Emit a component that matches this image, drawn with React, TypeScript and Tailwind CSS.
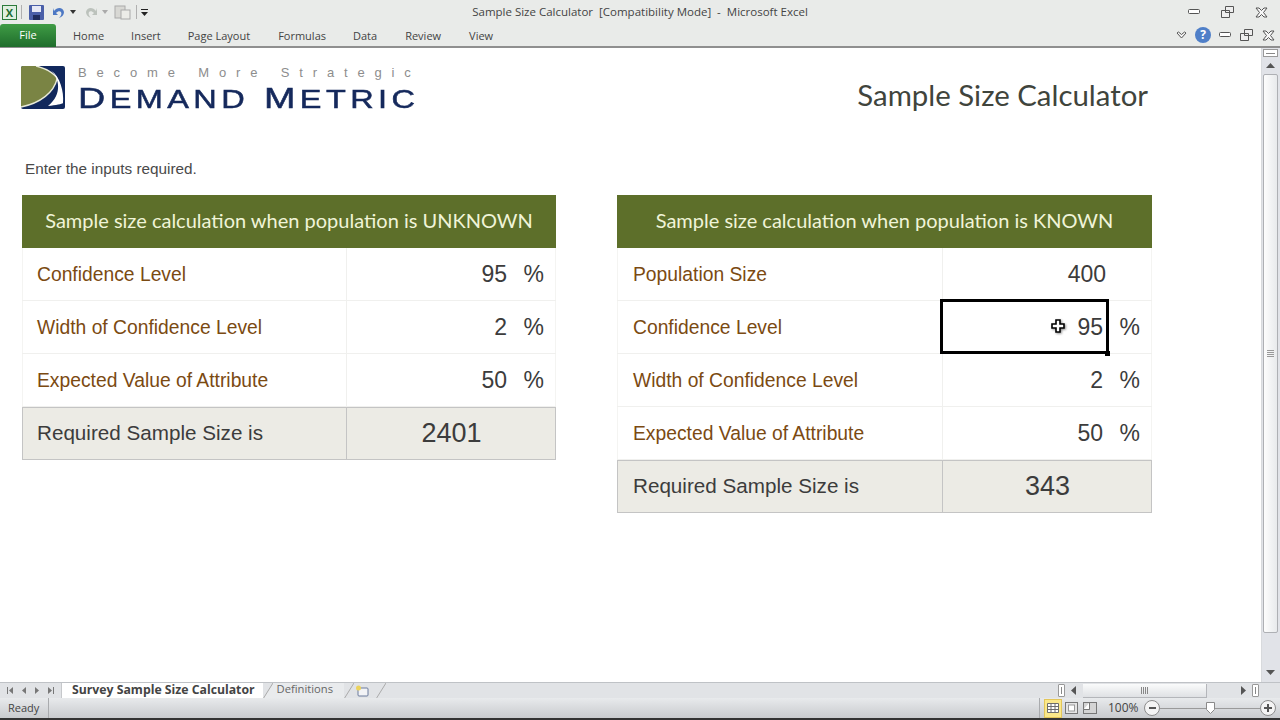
import React from "react";

const ui = "font-['Open_Sans',sans-serif]";

function Row({ label, value, pct, selected, wide, right }: { label: string; value: string; pct?: boolean; selected?: boolean; wide?: boolean; right?: boolean }) {
  return (
    <div className="flex h-[53px] border-b border-[#f0f0ee] shadow-[inset_1px_0_0_#f4f4f2,inset_-1px_0_0_#f4f4f2] font-['Liberation_Sans',sans-serif]">
      <div className={`${right ? "w-[326px] pl-[16px]" : "w-[325px] pl-[15px]"} shrink-0 flex items-center pt-[2px] text-[19.3px] text-[#7b4a12] border-r border-[#f0f0ee]`}>{label}</div>
      <div className={`relative flex-1 flex items-center justify-end text-[23px] text-[#3c3c3c] ${wide ? "pr-[2px]" : "pr-[5px]"}`}>
        <span>{value}</span>
        {selected && (
          <>
            <div className="absolute left-[-3px] right-[-1px] top-[-2px] bottom-[-1px] border-[3px] border-black" />
            <div className="absolute right-[-2px] bottom-[-3px] w-[5px] h-[5px] bg-black" />
            <svg className="absolute left-[107px] top-[17px] drop-shadow-[1px_1px_1px_rgba(0,0,0,0.45)]" width="18" height="18" viewBox="0 0 18 18">
              <path d="M6 2h4v4h4v4h-4v4H6v-4H2V6h4z" fill="#fff" stroke="#000" strokeWidth="1.6" />
            </svg>
          </>
        )}
      </div>
      <div className="w-[44px] shrink-0 flex items-center justify-end pr-[12px] text-[23px] text-[#3c3c3c]">{pct ? "%" : ""}</div>
    </div>
  );
}

function Total({ value, right }: { value: string; right?: boolean }) {
  return (
    <div className="flex h-[53px] bg-[#ecebe5] border border-[#c4c4c4] font-['Liberation_Sans',sans-serif] text-[#3c3c3c]">
      <div className={`${right ? "w-[325px] pl-[15px]" : "w-[324px] pl-[14px]"} shrink-0 flex items-center text-[20.65px] border-r border-[#c4c4c4]`}>Required Sample Size is</div>
      <div className="flex-1 flex items-center justify-center pl-[1px] text-[27px]">{value}</div>
    </div>
  );
}

function Table({ title, children, w }: { title: string; children: React.ReactNode; w: string }) {
  return (
    <div className={w}>
      <div className="h-[53px] bg-[#5d6f2a] flex items-center justify-center pb-[4px] text-[20px] text-[#f0f4d8] font-['Lato',sans-serif]">{title}</div>
      {children}
    </div>
  );
}

function Logo() {
  return (
    <div className="flex items-start gap-[13px]">
      <svg className="mt-[1px]" width="44" height="43" viewBox="0 0 44 43">
        <rect x="0" y="0" width="44" height="43" rx="2" fill="#11285c" />
        <path d="M0 2q0-2 2-2h13c14 3 20 10 21 13-3 13-16 24-36 28z" fill="#7a8444" />
        <path d="M15 0c14 3 21 11 21 13-3 13-16 24-36 28" fill="none" stroke="#e8ead8" strokeWidth="1.3" />
        <path d="M30 4c8 8 12 24-3 36 8-1 14-2 15-3 1-12-3-26-12-33z" fill="#fff" />
      </svg>
      <div className="w-[340px] pt-[1px]">
        <div className="text-[13px] leading-[13px] tracking-[9.85px] text-[#8d8d8d] font-['Liberation_Sans',sans-serif] whitespace-nowrap">Become More Strategic</div>
        <div className="mt-[6px] leading-[26px] text-[#15295c] font-['Liberation_Sans',sans-serif] whitespace-nowrap tracking-[3.4px] text-[29px] origin-left scale-x-[1.3] [-webkit-text-stroke:0.5px_#15295c]">
          D<span className="text-[25px]">EMAND</span> M<span className="text-[25px]">ETRIC</span>
        </div>
      </div>
    </div>
  );
}

function WinButtons({ small }: { small?: boolean }) {
  return (
    <div className={`flex items-center ${small ? "gap-[9px]" : "gap-[21px]"}`}>
      <svg width="12" height="6" viewBox="0 0 12 6"><rect x=".5" y=".5" width="11" height="4" rx="1" fill="#fff" stroke="#555" /></svg>
      <svg width="13" height="12" viewBox="0 0 13 12"><path d="M4.5.5h8v6h-8zM.5 4.5h8v7h-8z" fill="#eee" stroke="#555" /></svg>
      <svg width="13" height="11" viewBox="0 0 13 11"><path d="M1 1h3l2.500 2.500L9 1h3L8.500 5.500 12 10H9L6.500 7.500 4 10H1l3.500-4.500z" fill="#f7f7f7" stroke="#555" /></svg>
    </div>
  );
}

export default function App() {
  return (
    <div className="w-[1280px] h-[720px] overflow-hidden flex flex-col bg-white">
      {/* Title bar */}
      <div className={`h-[24px] shrink-0 flex items-center bg-[#e9ebe9] ${ui}`}>
        <div className="flex items-center gap-[4px] pl-[2px] w-[400px]">
          <div className="w-[15px] h-[15px] bg-[#dfeee0] border border-[#2b7a3a] flex items-center justify-center text-[11px] leading-none font-bold text-[#1d6b30]">X</div>
          <div className="w-px h-[14px] bg-[#b0b0b0]" />
          <svg className="ml-[3px]" width="15" height="15" viewBox="0 0 15 15"><rect width="15" height="15" rx="1" fill="#4a5fa8" /><rect x="3" y="1" width="9" height="6" fill="#e6e9f5" /><rect x="4" y="10" width="7" height="5" fill="#1f2c5c" /></svg>
          <svg className="ml-[4px]" width="14" height="13" viewBox="0 0 14 13"><path d="M2 5c3-4 9-4 10 1 0 3-2 5-5 6 2-2 3-4 2-6-1-1-3-1-5 1l2 2H1V2z" fill="#4d78c4" /></svg>
          <svg width="6" height="4" viewBox="0 0 6 4"><path d="M0 0h6L3 4z" fill="#333" /></svg>
          <svg className="ml-[4px]" width="14" height="13" viewBox="0 0 14 13"><path d="M12 5C9 1 3 1 2 6c0 3 2 5 5 6-2-2-3-4-2-6 1-1 3-1 5 1L8 9h5V2z" fill="#bcc2bc" /></svg>
          <svg width="6" height="4" viewBox="0 0 6 4"><path d="M0 0h6L3 4z" fill="#aaa" /></svg>
          <svg className="ml-[2px]" width="17" height="16" viewBox="0 0 17 16"><rect x="1" y="2" width="10" height="12" fill="#d8d8d4" stroke="#aaa" /><rect x="7" y="6" width="9" height="9" fill="#ecece8" stroke="#aaa" /></svg>
          <div className="ml-[1px] w-px h-[14px] bg-[#b0b0b0]" />
          <svg width="7" height="7" viewBox="0 0 7 7"><path d="M0 0h7v1H0zM0 3h7L3.500 7z" fill="#222" /></svg>
        </div>
        <div className="w-[480px] text-center text-[11.500px] text-[#444] whitespace-pre">Sample Size Calculator  [Compatibility Mode]  -  Microsoft Excel</div>
        <div className="flex-1 flex justify-end pr-[12px]"><WinButtons /></div>
      </div>

      {/* Ribbon tabs */}
      <div className={`h-[24px] shrink-0 flex items-center bg-[#e9ebe9] border-b-[2px] border-[#8f8f8f] text-[11px] text-[#444] ${ui}`}>
        <div className="w-[56px] h-[23px] rounded-t-[3px] bg-gradient-to-b from-[#3f9c45] to-[#1f6d2c] text-white flex items-center justify-center">File</div>
        <div className="flex items-center pt-[2px]">
          <span className="ml-[17px]">Home</span>
          <span className="ml-[27px]">Insert</span>
          <span className="ml-[27px]">Page Layout</span>
          <span className="ml-[28px]">Formulas</span>
          <span className="ml-[27px]">Data</span>
          <span className="ml-[28px]">Review</span>
          <span className="ml-[28px]">View</span>
        </div>
        <div className="flex-1 flex items-center justify-end pr-[5px] gap-[8px]">
          <svg width="11" height="8" viewBox="0 0 11 8"><path d="M1 2l1.500-1L5.500 3.500 8.500 1 10 2 5.500 7z" fill="#f6f6f6" stroke="#555" /></svg>
          <div className="w-[16px] h-[16px] rounded-full bg-[#4f7fc8] text-white text-[12px] leading-none font-bold flex items-center justify-center">?</div>
          <WinButtons small />
        </div>
      </div>

      {/* Sheet */}
      <div className="h-[634px] shrink-0 flex">
        <div className="flex-1 min-w-0 pl-[21px] pt-[17px] pr-[108px]">
          <div className="h-[44px] flex items-start justify-between">
            <Logo />
            <div className="text-[29.4px] leading-[30px] mt-[15px] mr-[5px] text-[#40443c] font-['Lato',sans-serif]">Sample Size Calculator</div>
          </div>
          <div className="mt-[50px] pl-[4px] h-[20px] text-[15.300px] leading-[20px] text-[#4a4a4a] font-['Liberation_Sans',sans-serif]">Enter the inputs required.</div>
          <div className="mt-[16px] pl-[1px] flex items-start gap-[61px]">
            <Table title="Sample size calculation when population is UNKNOWN" w="w-[534px]">
              <Row label="Confidence Level" value="95" pct />
              <Row label="Width of Confidence Level" value="2" pct />
              <Row label="Expected Value of Attribute" value="50" pct />
              <Total value="2401" />
            </Table>
            <Table title="Sample size calculation when population is KNOWN" w="w-[535px]">
              <Row label="Population Size" value="400" wide right />
              <Row label="Confidence Level" value="95" pct selected right />
              <Row label="Width of Confidence Level" value="2" pct right />
              <Row label="Expected Value of Attribute" value="50" pct right />
              <Total value="343" right />
            </Table>
          </div>
        </div>
        {/* Vertical scrollbar */}
        <div className="w-[19px] shrink-0 bg-[#e1e3e8] border-l border-[#d8dadd] flex flex-col pl-[1px]">
          <div className="w-[15px] h-[8px] mt-[1px] border border-[#999] bg-white flex items-center justify-center"><div className="w-[9px] h-px bg-[#888]" /></div>
          <div className="w-[15px] h-[17px] flex items-center justify-center"><svg width="9" height="5" viewBox="0 0 9 5"><path d="M4.500 0L9 5H0z" fill="#555" /></svg></div>
          <div className="w-[15px] h-[559px] rounded-[2px] bg-gradient-to-r from-[#fdfdfd] to-[#e8eaec] border border-[#aeb0b4] flex items-center justify-center">
            <div className="w-[7px] flex flex-col gap-[1px]"><div className="h-px bg-[#999]" /><div className="h-px bg-[#999]" /><div className="h-px bg-[#999]" /><div className="h-px bg-[#999]" /></div>
          </div>
          <div className="w-[15px] flex-1 flex items-end justify-center pb-[7px]"><svg width="9" height="5" viewBox="0 0 9 5"><path d="M0 0h9L4.500 5z" fill="#555" /></svg></div>
        </div>
      </div>

      {/* Sheet tabs */}
      <div className="h-[16px] shrink-0 flex items-center bg-[#e1e3e6] border-t border-[#bfc2c6] text-[#555]">
        <div className="w-[62px] flex items-center justify-center gap-[9px] border-r border-[#c6c8cb] h-full text-[#777]">
          <svg width="6" height="7" viewBox="0 0 6 7"><path d="M0 0h1v7H0zM6 0v7L2 3.500z" fill="currentColor" /></svg>
          <svg width="4" height="7" viewBox="0 0 4 7"><path d="M4 0v7L0 3.500z" fill="currentColor" /></svg>
          <svg width="4" height="7" viewBox="0 0 4 7"><path d="M0 0v7l4-3.500z" fill="currentColor" /></svg>
          <svg width="6" height="7" viewBox="0 0 6 7"><path d="M5 0h1v7H5zM0 0v7l4-3.500z" fill="currentColor" /></svg>
        </div>
        <div className={`h-full bg-white pl-[10px] pr-[8px] flex items-center text-[12.25px] leading-none pb-[1px] font-bold text-[#444] whitespace-nowrap ${ui}`}>Survey Sample Size Calculator</div>
        <svg width="10" height="16" viewBox="0 0 10 16"><path d="M0 16L10 0v16z" fill="#e9ebed" /><path d="M0 16L10 0" stroke="#aaa" fill="none" /></svg>
        <div className={`h-full pl-[4px] pr-[11px] flex items-center text-[11.2px] leading-none pb-[3px] text-[#666] whitespace-nowrap bg-[#e9ebed] ${ui}`}>Definitions</div>
        <svg width="10" height="16" viewBox="0 0 10 16"><path d="M0 16L10 0" stroke="#aaa" fill="none" /></svg>
        <svg className="ml-[1px]" width="14" height="12" viewBox="0 0 14 12"><rect x="3" y="3" width="10" height="8" rx="1" fill="#f2f3f6" stroke="#6b7a9c" /><circle cx="3.500" cy="3" r="2.500" fill="#ecd35c" /></svg>
        <svg className="ml-[7px]" width="10" height="16" viewBox="0 0 10 16"><path d="M0 16L10 0" stroke="#aaa" fill="none" /></svg>
        <div className="flex-1 h-full flex items-center justify-end pr-[2px]">
          <div className="w-[7px] h-[13px] border border-[#999] bg-white rounded-[1px] flex items-center justify-center"><div className="w-px h-[7px] bg-[#888]" /></div>
          <svg className="ml-[6px]" width="5" height="9" viewBox="0 0 5 9"><path d="M5 0v9L0 4.500z" fill="#555" /></svg>
          <div className="ml-[7px] w-[124px] h-[14px] bg-gradient-to-b from-[#fafbfb] to-[#dfe1e4] border-r border-b border-[#b4b6ba] flex items-center justify-center">
            <div className="flex gap-px"><div className="w-px h-[7px] bg-[#888]" /><div className="w-px h-[7px] bg-[#888]" /><div className="w-px h-[7px] bg-[#888]" /><div className="w-px h-[7px] bg-[#888]" /></div>
          </div>
          <svg className="ml-[34px]" width="5" height="9" viewBox="0 0 5 9"><path d="M0 0v9l5-4.500z" fill="#555" /></svg>
          <div className="ml-[6px] w-[7px] h-[13px] border border-[#999] bg-white rounded-[1px] flex items-center justify-center"><div className="w-px h-[7px] bg-[#888]" /></div>
          <div className="w-[19px]" />
        </div>
      </div>

      {/* Status bar */}
      <div className={`h-[20px] shrink-0 flex items-center bg-gradient-to-b from-[#e8eaec] to-[#c9cbce] text-[11px] text-[#444] ${ui}`}>
        <div className="w-[49px] h-full flex items-center pl-[8px] border-r border-[#a9abae]">Ready</div>
        <div className="flex-1 h-full flex items-center justify-end">
          <div className="h-full w-px bg-[#a9abae] mr-[4px]" />
          <div className="w-[18px] h-[19px] bg-[#fbe88a] border border-[#e3c65a] flex items-center justify-center">
            <svg width="12" height="10" viewBox="0 0 12 10"><path d="M.5.500h11v9H.5zM.5 3.500h11M.5 6.500h11M4 .5v9M8 .5v9" fill="#fff" stroke="#6d6d6d" /></svg>
          </div>
          <svg className="ml-[3px]" width="13" height="12" viewBox="0 0 13 12"><rect x=".5" y=".5" width="12" height="11" fill="#e4e4e4" stroke="#777" /><rect x="3.500" y="3" width="6" height="6" fill="#fff" stroke="#999" /></svg>
          <svg className="ml-[5px]" width="14" height="12" viewBox="0 0 14 12"><rect x=".5" y=".5" width="13" height="11" fill="#d4d4d4" stroke="#777" /><path d="M.5 7.500h6V.5M6.500 .5v7" fill="#fff" stroke="#777" /></svg>
          <span className="ml-[11px] w-[30px] text-[12px] text-[#444] whitespace-nowrap">100%</span>
          <div className="ml-[6px] w-[16px] h-[16px] rounded-full border border-[#8c8c8c] bg-[#f4f4f4] flex items-center justify-center"><div className="w-[7px] h-[2px] bg-[#555]" /></div>
          <div className="relative w-[100px] h-px bg-[#9a9a9a]">
            <svg className="absolute left-[46px] top-[-6px]" width="9" height="12" viewBox="0 0 9 12"><path d="M.5.500h8v7L4.500 11.500.5 7.500z" fill="#fff" stroke="#8a8a8a" /></svg>
          </div>
          <div className="w-[16px] h-[16px] rounded-full border border-[#8c8c8c] bg-[#f4f4f4] text-[#555] flex items-center justify-center relative mr-[4px]">
            <div className="w-[8px] h-[2px] bg-[#555]" />
            <div className="absolute w-[2px] h-[8px] bg-[#555]" />
          </div>
        </div>
      </div>
      <div className="flex-1 bg-[#333]" />
    </div>
  );
}
